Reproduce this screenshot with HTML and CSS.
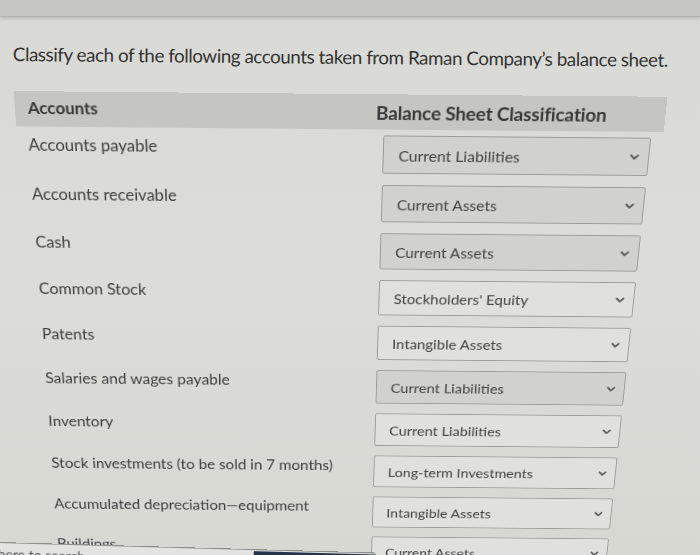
FILE: index.html
```html
<!DOCTYPE html>
<html lang="en">
<head>
<meta charset="utf-8">
<title>Balance sheet classification</title>
<link rel="stylesheet" href="styles.css">
</head>
<body>
<div class="topbar"></div>
<main class="sheet">
  <p class="prompt">Classify each of the following accounts taken from Raman Company’s balance sheet.</p>
  <div class="table">
    <div class="thead">
      <div class="th th-accounts">Accounts</div>
      <div class="th th-class">Balance Sheet Classification</div>
    </div>
    <div class="row">
      <div class="label">Accounts payable</div>
      <div class="select dark"><span>Current Liabilities</span><svg class="chev" viewBox="0 0 10 6"><path d="M1 1l4 4 4-4"/></svg></div>
    </div>
    <div class="row">
      <div class="label">Accounts receivable</div>
      <div class="select dark"><span>Current Assets</span><svg class="chev" viewBox="0 0 10 6"><path d="M1 1l4 4 4-4"/></svg></div>
    </div>
    <div class="row">
      <div class="label">Cash</div>
      <div class="select dark"><span>Current Assets</span><svg class="chev" viewBox="0 0 10 6"><path d="M1 1l4 4 4-4"/></svg></div>
    </div>
    <div class="row">
      <div class="label">Common Stock</div>
      <div class="select"><span>Stockholders' Equity</span><svg class="chev" viewBox="0 0 10 6"><path d="M1 1l4 4 4-4"/></svg></div>
    </div>
    <div class="row">
      <div class="label">Patents</div>
      <div class="select"><span>Intangible Assets</span><svg class="chev" viewBox="0 0 10 6"><path d="M1 1l4 4 4-4"/></svg></div>
    </div>
    <div class="row">
      <div class="label">Salaries and wages payable</div>
      <div class="select dark"><span>Current Liabilities</span><svg class="chev" viewBox="0 0 10 6"><path d="M1 1l4 4 4-4"/></svg></div>
    </div>
    <div class="row">
      <div class="label">Inventory</div>
      <div class="select"><span>Current Liabilities</span><svg class="chev" viewBox="0 0 10 6"><path d="M1 1l4 4 4-4"/></svg></div>
    </div>
    <div class="row">
      <div class="label">Stock investments (to be sold in 7 months)</div>
      <div class="select"><span>Long-term Investments</span><svg class="chev" viewBox="0 0 10 6"><path d="M1 1l4 4 4-4"/></svg></div>
    </div>
    <div class="row">
      <div class="label">Accumulated depreciation—equipment</div>
      <div class="select"><span>Intangible Assets</span><svg class="chev" viewBox="0 0 10 6"><path d="M1 1l4 4 4-4"/></svg></div>
    </div>
    <div class="row">
      <div class="label">Buildings</div>
      <div class="select"><span>Current Assets</span><svg class="chev" viewBox="0 0 10 6"><path d="M1 1l4 4 4-4"/></svg></div>
    </div>
  </div>
</main>
<div class="taskbar">
  <div class="search">here to search</div>
  <div class="task-app"></div>
</div>
</body>
</html>
```

FILE: styles.css
```css
html, body {
  margin: 0;
  padding: 0;
}
body {
  width: 700px;
  height: 555px;
  overflow: hidden;
  background: linear-gradient(180deg, #d9dad5 0%, #dcddd8 50%, #d7d8d2 100%);
  font-family: Lato, "Open Sans", sans-serif;
  color: #3a3a3a;
  position: relative;
}
.topbar {
  height: 16px;
  background: #c6c7c2;
  border-bottom: 1px solid #b3b4af;
  box-shadow: 0 2px 3px rgba(0,0,0,0.12);
}
.sheet {
  padding: 0 0 0 13px;
  transform-origin: 50% 0;
  transform: rotate(0.5deg);
}
.prompt {
  margin: 28px 0 0 0;
  font-size: 18.8px;
  line-height: 24px;
  letter-spacing: -0.44px;
  white-space: nowrap;
  color: #333;
}
.table {
  margin-top: 25px;
  width: 655px;
  transform-origin: 299px 0;
  transform: perspective(500px) rotateX(-8deg);
}
.thead {
  display: flex;
  align-items: center;
  height: 36px;
  margin-left: 1px;
  background: #c5c6c1;
}
.th {
  font-weight: 700;
  color: #383838;
}
.th-accounts {
  width: 350px;
  padding-left: 13px;
  font-size: 17px;
  margin-top: -4px;
}
.th-class {
  font-size: 19px;
  letter-spacing: -0.15px;
  margin-top: 1px;
}
.row {
  display: flex;
  align-items: flex-start;
  height: 52px;
  padding-left: 12px;
}
.thead + .row { margin-top: 6px; }
.label {
  width: 360px;
  font-size: 17px;
  line-height: 20px;
  padding-top: 3px;
  color: #3e3e3e;
}
.select {
  display: flex;
  align-items: center;
  justify-content: space-between;
  box-sizing: border-box;
  width: 271px;
  height: 40px;
  padding: 0 9px 0 15px;
  background: #e0e1dc;
  border: 1px solid #9a9b96;
  border-radius: 2px;
  font-size: 16px;
  color: #424242;
}
.select.dark {
  background: #d1d2cd;
}
.chev {
  width: 10px;
  height: 6px;
  fill: none;
  stroke: #555;
  stroke-width: 1.8;
}
.taskbar {
  position: absolute;
  left: -2px;
  top: 542px;
  width: 378px;
  height: 30px;
  display: flex;
  align-items: flex-start;
  background: #e3e3df;
  border-top: 1px solid #8f908b;
  transform-origin: 0 0;
  transform: rotate(1.6deg);
}
.search {
  width: 257px;
  padding-top: 3px;
  font-size: 14px;
  line-height: 16px;
  color: #555;
}
.task-app {
  width: 123px;
  height: 20px;
  margin-top: 1px;
  background: #26334d;
}
```
